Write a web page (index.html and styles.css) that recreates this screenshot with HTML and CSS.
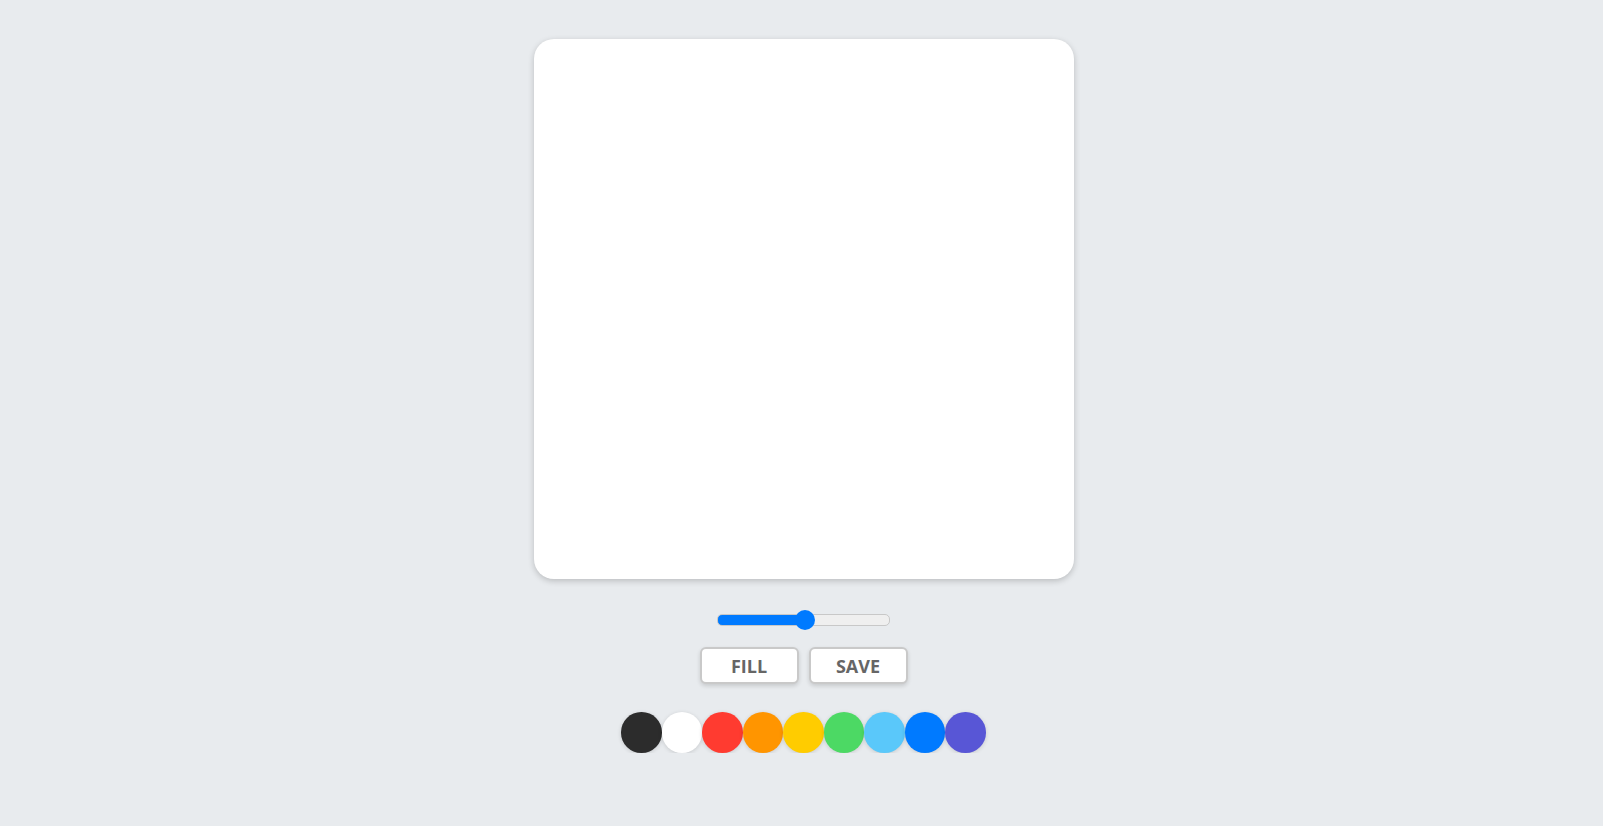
FILE: index.html
```html
<!DOCTYPE html>
<html lang="en">
<head>
<meta charset="utf-8">
<title>Paint</title>
<link rel="stylesheet" href="styles.css">
</head>
<body>
<main class="app">
  <div class="canvas"></div>
  <div class="slider-row">
    <input class="size-slider" type="range" min="0" max="100" value="51">
  </div>
  <div class="buttons">
    <button class="btn">FILL</button>
    <button class="btn">SAVE</button>
  </div>
  <div class="colors">
    <div class="color c-black"></div>
    <div class="color c-white"></div>
    <div class="color c-red"></div>
    <div class="color c-orange"></div>
    <div class="color c-yellow"></div>
    <div class="color c-green"></div>
    <div class="color c-sky"></div>
    <div class="color c-blue"></div>
    <div class="color c-purple"></div>
  </div>
</main>
</body>
</html>
```
FILE: styles.css
```css
html, body {
  margin: 0;
  padding: 0;
  background: #e8ebee;
  font-family: "Open Sans", "Liberation Sans", sans-serif;
}
.app {
  display: flex;
  flex-direction: column;
  align-items: center;
  padding-top: 39px;
  padding-left: 4px;
}
.canvas {
  width: 540px;
  height: 540px;
  background: #fff;
  border-radius: 20px;
  box-shadow: 0 2px 6px rgba(0, 0, 0, 0.2);
}
.slider-row {
  margin-top: 31px;
  height: 20px;
  display: flex;
  align-items: center;
}
.size-slider {
  -webkit-appearance: none;
  appearance: none;
  width: 171px;
  height: 10px;
  margin: 0;
  border-radius: 5px;
  border: 1px solid #c8c8c8;
  background: linear-gradient(to right, #007aff 51%, #efefef 51%);
  outline: none;
}
.size-slider::-webkit-slider-thumb {
  -webkit-appearance: none;
  appearance: none;
  width: 20px;
  height: 20px;
  border-radius: 50%;
  background: #007aff;
  border: none;
  cursor: pointer;
}
.buttons {
  margin-top: 17px;
  display: flex;
  gap: 10px;
}
.btn {
  width: 99px;
  height: 37px;
  background: #fff;
  border: 2px solid #c9c9c9;
  border-radius: 6px;
  box-shadow: 0 2px 4px rgba(0, 0, 0, 0.14);
  font-family: "Open Sans", "Liberation Sans", sans-serif;
  font-weight: 700;
  font-size: 18px;
  color: #666;
  padding: 0;
  cursor: pointer;
}
.colors {
  margin-top: 28px;
  display: flex;
}
.color {
  width: 40.5px;
  height: 40.5px;
  border-radius: 50%;
  box-shadow: 0 1px 4px rgba(0, 0, 0, 0.14);
}
.c-black { background: #2c2c2c; }
.c-white { background: #ffffff; }
.c-red { background: #ff3b30; }
.c-orange { background: #ff9500; }
.c-yellow { background: #ffcc00; }
.c-green { background: #4cd964; }
.c-sky { background: #5ac8fa; }
.c-blue { background: #007aff; }
.c-purple { background: #5856d6; }
```
